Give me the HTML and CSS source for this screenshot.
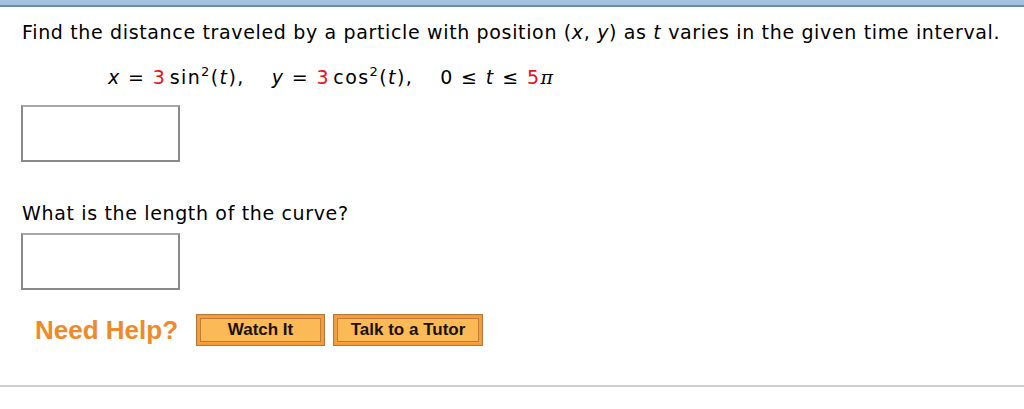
FILE: index.html
```html
<!DOCTYPE html>
<html>
<head>
<meta charset="utf-8">
<link rel="stylesheet" href="styles.css">
</head>
<body>
<div class="topbar"></div>
<div class="content">
  <p class="question">Find the distance traveled by a particle with position (<i>x</i>, <i>y</i>) as <i>t</i> varies in the given time interval.</p>
  <p class="math"><i>x</i> = <span class="red">3</span>&#8202;sin<sup>2</sup>(<i>t</i>),<span class="sp"></span><i>y</i> = <span class="red">3</span>&#8202;cos<sup>2</sup>(<i>t</i>),<span class="sp"></span>0 ≤ <i>t</i> ≤ <span class="red">5</span><i class="pi">π</i></p>
  <div class="answer first"></div>
  <p class="question q2">What is the length of the curve?</p>
  <div class="answer"></div>
  <div class="help">
    <span class="needhelp">Need Help?</span>
    <span class="btn watch"><span class="inner">Watch It</span></span>
    <span class="btn tutor"><span class="inner">Talk to a Tutor</span></span>
  </div>
</div>
<div class="rule"></div>
</body>
</html>
```
FILE: styles.css
```css
html, body { margin: 0; padding: 0; background: #fff; }
body { font-family: "DejaVu Sans", Verdana, sans-serif; color: #000; }
.topbar { height: 5px; background: #a2c2de; border-bottom: 2px solid #6f8ca6; }
.content { padding-left: 22px; }
.question { margin: 0; font-size: 19px; letter-spacing: 0.65px; line-height: 24px; padding-top: 13px; }
.question i { font-style: italic; }
.math { margin: 0; padding-top: 21px; padding-left: 86px; font-size: 19px; letter-spacing: 1.4px; line-height: 24px; }
.math sup { font-size: 13px; line-height: 0; vertical-align: 8px; }
.red { color: #e8131a; }
.sp { display: inline-block; width: 27px; }
.pi { font-family: "DejaVu Serif", serif; }
.answer { width: 155px; height: 53px; border: 2px solid #8a8a8a; border-top-color: #a8a8a8; }
.answer.first { margin-top: 16px; margin-left: -1px; }
.q2 { padding-top: 39px; }
.q2 + .answer { margin-top: 8px; margin-left: -1px; }
.help { display: flex; align-items: center; margin-top: 24px; padding-left: 13px; gap: 8px; }
.needhelp { font-family: "Liberation Sans", Arial, sans-serif; font-weight: bold; font-size: 26px; color: #ef8a2a; margin-right: 10px; }
.btn { display: inline-flex; box-sizing: border-box; height: 32px; padding: 3px; background: #f5a040; border: 1px solid #b5773a; box-shadow: inset 0 0 2px #f08a20; }
.btn .inner { display: flex; align-items: center; justify-content: center; box-sizing: border-box; height: 24px; border: 1px solid #c07b35; background: #fbba55; font-family: "Liberation Sans", Arial, sans-serif; font-weight: bold; font-size: 17px; color: #1a1200; }
.watch { width: 129px; }
.watch .inner { width: 121px; }
.tutor { width: 150px; }
.tutor .inner { width: 142px; }
.rule { margin-top: 39px; height: 0; border-top: 2px solid #cfcfcf; }
```
